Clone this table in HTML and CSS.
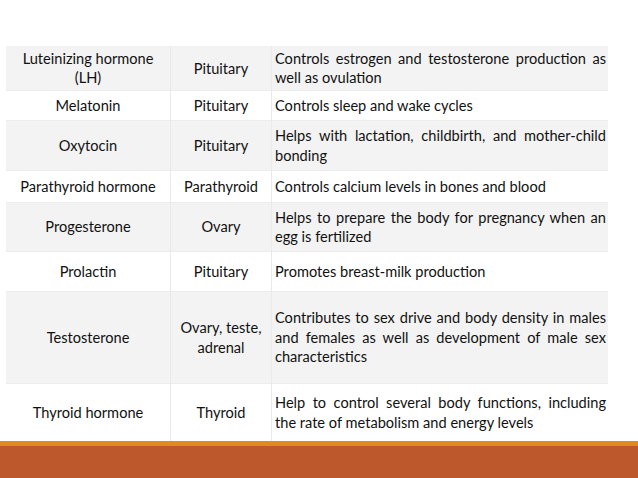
FILE: index.html
```
<!DOCTYPE html>
<html>
<head>
<meta charset="utf-8">
<link rel="stylesheet" href="styles.css">
</head>
<body>
<div class="slide">
  <table class="hormones">
    <tr class="gray r1">
      <td class="c1">Luteinizing hormone<br>(LH)</td>
      <td class="c2">Pituitary</td>
      <td class="c3">Controls estrogen and testosterone production as well as ovulation</td>
    </tr>
    <tr class="r2">
      <td class="c1">Melatonin</td>
      <td class="c2">Pituitary</td>
      <td class="c3">Controls sleep and wake cycles</td>
    </tr>
    <tr class="gray r3">
      <td class="c1">Oxytocin</td>
      <td class="c2">Pituitary</td>
      <td class="c3">Helps with lactation, childbirth, and mother-child bonding</td>
    </tr>
    <tr class="r4">
      <td class="c1">Parathyroid hormone</td>
      <td class="c2">Parathyroid</td>
      <td class="c3">Controls calcium levels in bones and blood</td>
    </tr>
    <tr class="gray r5">
      <td class="c1">Progesterone</td>
      <td class="c2">Ovary</td>
      <td class="c3">Helps to prepare the body for pregnancy when an egg is fertilized</td>
    </tr>
    <tr class="r6">
      <td class="c1">Prolactin</td>
      <td class="c2">Pituitary</td>
      <td class="c3">Promotes breast-milk production</td>
    </tr>
    <tr class="gray r7">
      <td class="c1">Testosterone</td>
      <td class="c2">Ovary, teste,<br>adrenal</td>
      <td class="c3">Contributes to sex drive and body density in males and females as well as development of male sex characteristics</td>
    </tr>
    <tr class="r8">
      <td class="c1">Thyroid hormone</td>
      <td class="c2">Thyroid</td>
      <td class="c3">Help to control several body functions, including the rate of metabolism and energy levels</td>
    </tr>
  </table>
  <div class="footer"></div>
</div>
</body>
</html>
```
FILE: styles.css
```
html, body {
  margin: 0;
  padding: 0;
  background: #ffffff;
}
.slide {
  width: 638px;
  height: 478px;
  display: flex;
  flex-direction: column;
  overflow: hidden;
  font-family: Lato, "Liberation Sans", sans-serif;
  font-size: 14.6px;
  line-height: 19.5px;
  color: #111111;
}
.hormones {
  margin: 46px 0 0 6px;
  width: 602px;
  border-collapse: collapse;
  table-layout: fixed;
}
.hormones td {
  padding: 1px 3px 0;
  vertical-align: middle;
  border-left: 1px solid #e9e9e9;
  border-top: 1px solid #ececec;
}
.hormones tr:first-child td {
  border-top: none;
}
.hormones td.c1 {
  border-left: none;
  width: 158px;
  text-align: center;
}
.hormones td.c2 {
  width: 94px;
  text-align: center;
}
.hormones td.c3 {
  text-align: justify;
  padding-right: 2px;
}
.gray td {
  background: #f3f3f3;
}
.r1 { height: 44px; }
.r2 { height: 30px; }
.r3 { height: 50px; }
.r4 { height: 32px; }
.r5 { height: 49px; }
.r6 { height: 40px; }
.r7 { height: 92px; }
.r8 { height: 58px; }
.footer {
  margin-top: auto;
  height: 32px;
  background: #bc582b;
  border-top: 5px solid #e4881f;
}
```
